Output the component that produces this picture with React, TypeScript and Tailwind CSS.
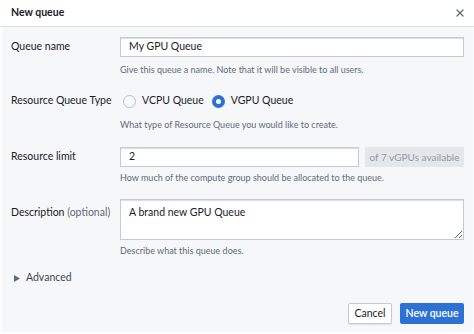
import { X } from 'lucide-react';

const font = { fontFamily: 'Lato, "Open Sans", sans-serif' };

function Radio({ checked, label }: { checked?: boolean; label: string }) {
  return (
    <label className="flex items-center gap-[6px]">
      {checked ? (
        <span className="w-[13px] h-[13px] rounded-full bg-[#2d72d2] flex items-center justify-center">
          <span className="w-[5px] h-[5px] rounded-full bg-white" />
        </span>
      ) : (
        <span className="w-[13px] h-[13px] rounded-full border border-[#b8bec7] bg-[#f8f9fa]" />
      )}
      <span className="text-[10.5px] text-[#1c2127]">{label}</span>
    </label>
  );
}

export default function App() {
  return (
    <div className="w-[474px] h-[334px] bg-white" style={font}>
      {/* Header */}
      <div className="h-[27px] flex items-center justify-between pl-[11px] pr-[8px] border-b border-[#dde1e6] bg-white">
        <span className="text-[10.5px] font-bold text-[#1c2127]">New queue</span>
        <X className="w-[12px] h-[12px] text-[#5f6b7c]" strokeWidth={2.5} />
      </div>

      {/* Body */}
      <div className="ml-[2px] mr-[1px] h-[305px] bg-[#f6f7f9] pl-[9px] pr-[9px] pt-[10px]">
        {/* Queue name */}
        <div className="flex">
          <div className="w-[109px] h-[20px] flex items-center text-[10.5px] text-[#1c2127]">Queue name</div>
          <div className="flex-1">
            <div className="h-[20px] bg-white border border-[#c5cbd3] shadow-[inset_0_1px_1px_rgba(17,20,24,0.15)] flex items-center pl-[8px] text-[10.5px] text-[#1c2127]">
              My GPU Queue
            </div>
            <div className="mt-[7px] text-[9px] leading-[12px] text-[#5f6b7c]">
              Give this queue a name. Note that it will be visible to all users.
            </div>
          </div>
        </div>

        {/* Resource queue type */}
        <div className="flex mt-[15px]">
          <div className="w-[109px] h-[20px] flex items-center text-[10.5px] text-[#1c2127]">Resource Queue Type</div>
          <div className="flex-1">
            <div className="h-[20px] flex items-center gap-[8px] pl-[3px]">
              <Radio label="VCPU Queue" />
              <Radio checked label="VGPU Queue" />
            </div>
            <div className="mt-[8px] text-[9px] leading-[12px] text-[#5f6b7c]">
              What type of Resource Queue you would like to create.
            </div>
          </div>
        </div>

        {/* Resource limit */}
        <div className="flex mt-[16px]">
          <div className="w-[109px] h-[20px] flex items-center text-[10.5px] text-[#1c2127]">Resource limit</div>
          <div className="flex-1">
            <div className="flex gap-[6px]">
              <div className="w-[239px] h-[20px] bg-white border border-[#c5cbd3] shadow-[inset_0_1px_1px_rgba(17,20,24,0.15)] flex items-center pl-[8px] text-[10.5px] text-[#1c2127]">
                2
              </div>
              <div className="flex-1 h-[20px] bg-[#e5e8eb] flex items-center justify-center text-[10px] text-[#8f99a8]">
                of 7 vGPUs available
              </div>
            </div>
            <div className="mt-[5px] text-[9px] leading-[12px] text-[#5f6b7c]">
              How much of the compute group should be allocated to the queue.
            </div>
          </div>
        </div>

        {/* Description */}
        <div className="flex mt-[15px]">
          <div className="w-[109px] pt-[6px] leading-[14px] text-[10.5px] text-[#1c2127]">
            Description <span className="text-[#5f6b7c]">(optional)</span>
          </div>
          <div className="flex-1">
            <textarea
              readOnly
              defaultValue="A brand new GPU Queue"
              className="block w-full h-[41px] bg-white border border-[#c5cbd3] shadow-[inset_0_1px_1px_rgba(17,20,24,0.15)] pl-[8px] pt-[5px] text-[10.5px] leading-[14px] text-[#1c2127] outline-none"
              style={font}
            />
            <div className="mt-[5px] text-[9px] leading-[12px] text-[#5f6b7c]">
              Describe what this queue does.
            </div>
          </div>
        </div>

        {/* Advanced */}
        <div className="mt-[15px] flex items-center gap-[6px] pl-[3px] h-[12px]">
          <svg width="6" height="7" viewBox="0 0 6 7">
            <path d="M0 0 L6 3.5 L0 7 Z" fill="#5f6b7c" />
          </svg>
          <span className="text-[10.5px] text-[#404854]">Advanced</span>
        </div>

        {/* Footer */}
        <div className="mt-[19px] flex justify-end gap-[8px]">
          <button className="h-[21px] w-[44px] bg-white border border-[#c5cbd3] rounded-[2px] shadow-[0_1px_1px_rgba(17,20,24,0.1)] text-[10.5px] text-[#1c2127]">
            Cancel
          </button>
          <button className="h-[21px] w-[64px] bg-[#2d72d2] rounded-[2px] text-[10.5px] font-semibold text-white">
            New queue
          </button>
        </div>
      </div>
    </div>
  );
}
